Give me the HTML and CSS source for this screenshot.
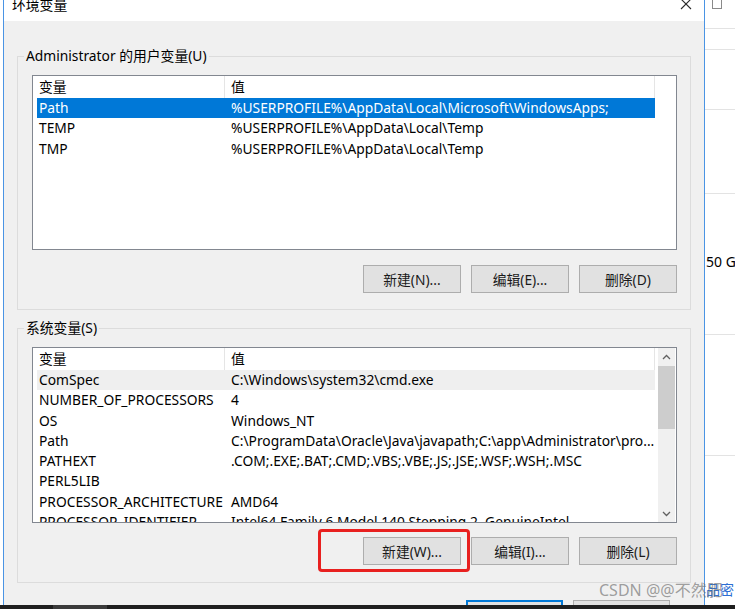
FILE: index.html
```html
<!DOCTYPE html>
<html lang="zh-CN">
<head>
    <meta charset="UTF-8">
    <title>环境变量</title>
    <link rel="stylesheet" href="styles.css">
</head>
<body>
<div class="screen">
    <div class="desk">
        <div class="bgLeft"></div>

        <!-- Fenêtre "环境变量" -->
        <div class="dialog">
            <div class="titleBar">
                <span class="title">环境变量</span>
                <svg class="closeIcon" width="12" height="12" viewBox="0 0 12 12"><path d="M1 1L11 11M11 1L1 11" stroke="#2b2b2b" stroke-width="1.1" fill="none"/></svg>
            </div>
            <div class="dialogBody">
                <fieldset class="group">
                    <legend>Administrator 的用户变量(U)</legend>
                    <div class="listView">
                        <div class="listMain">
                            <div class="listHeader"><span>变量</span><span>值</span></div>
                            <div class="row selected"><span>Path</span><span>%USERPROFILE%\AppData\Local\Microsoft\WindowsApps;</span></div>
                            <div class="row"><span>TEMP</span><span>%USERPROFILE%\AppData\Local\Temp</span></div>
                            <div class="row"><span>TMP</span><span>%USERPROFILE%\AppData\Local\Temp</span></div>
                        </div>
                    </div>
                    <div class="buttonRow">
                        <button class="btn">新建(N)...</button>
                        <button class="btn">编辑(E)...</button>
                        <button class="btn">删除(D)</button>
                    </div>
                </fieldset>

                <fieldset class="group system">
                    <legend>系统变量(S)</legend>
                    <div class="listView">
                        <div class="listMain">
                            <div class="listHeader"><span>变量</span><span>值</span></div>
                            <div class="row inactive"><span>ComSpec</span><span>C:\Windows\system32\cmd.exe</span></div>
                            <div class="row"><span>NUMBER_OF_PROCESSORS</span><span>4</span></div>
                            <div class="row"><span>OS</span><span>Windows_NT</span></div>
                            <div class="row"><span>Path</span><span>C:\ProgramData\Oracle\Java\javapath;C:\app\Administrator\pro...</span></div>
                            <div class="row"><span>PATHEXT</span><span>.COM;.EXE;.BAT;.CMD;.VBS;.VBE;.JS;.JSE;.WSF;.WSH;.MSC</span></div>
                            <div class="row"><span>PERL5LIB</span><span></span></div>
                            <div class="row"><span>PROCESSOR_ARCHITECTURE</span><span>AMD64</span></div>
                            <div class="row"><span>PROCESSOR_IDENTIFIER</span><span>Intel64 Family 6 Model 140 Stepping 2, GenuineIntel</span></div>
                        </div>
                        <div class="scrollBar">
                            <div class="scrollArrow"><svg width="9" height="6" viewBox="0 0 9 6"><path d="M1 5L4.5 1.5L8 5" stroke="#606060" stroke-width="1.3" fill="none"/></svg></div>
                            <div class="scrollThumb"></div>
                            <div class="scrollTrack"></div>
                            <div class="scrollArrow"><svg width="9" height="6" viewBox="0 0 9 6"><path d="M1 1L4.5 4.5L8 1" stroke="#606060" stroke-width="1.3" fill="none"/></svg></div>
                        </div>
                    </div>
                    <div class="buttonRow">
                        <button class="btn">新建(W)...</button>
                        <button class="btn">编辑(I)...</button>
                        <button class="btn">删除(L)</button>
                    </div>
                </fieldset>

                <div class="footerButtons">
                    <button class="btn primary">确定</button>
                    <button class="btn">取消</button>
                </div>
            </div>
        </div>

        <!-- Fenêtre en arrière-plan -->
        <div class="bgRight">
            <div class="bgRow" style="height:29px"><span class="winBox"></span></div>
            <div class="bgRow" style="height:21px"></div>
            <div class="bgRow" style="height:60px"></div>
            <div class="bgRow" style="height:84px"></div>
            <div class="bgRow" style="height:141px"><span class="bgText">50 GB</span></div>
            <div class="bgRow" style="height:121px"></div>
            <div class="bgRow last"><span class="bgLink">品密</span></div>
        </div>
    </div>
    <div class="taskbar"><span class="taskItem"></span></div>

    <div class="highlight"></div>
    <div class="watermark">CSDN @@不然肥</div>
</div>
</body>
</html>
```

FILE: styles.css
```css
* {
    box-sizing: border-box;
}
body {
    margin: 0;
    font-family: "Noto Sans", "Noto Sans CJK SC", sans-serif;
    font-size: 13.8px;
    color: #000;
    background: #fff;
}
.screen {
    position: relative;
    width: 735px;
    height: 609px;
    overflow: hidden;
}
.desk {
    display: flex;
    height: 605px;
    overflow: hidden;
}
.bgLeft {
    width: 3px;
    background: #fff;
}

/* Dialogue */
.dialog {
    width: 702px;
    display: flex;
    flex-direction: column;
    background: #f0f0f0;
    border-left: 1px solid #4a94e4;
    border-right: 1px solid #4a94e4;
}
.titleBar {
    height: 21px;
    flex: none;
    background: #fff;
    display: flex;
    justify-content: space-between;
    align-items: flex-start;
}
.title {
    margin: -5px 0 0 8px;
    line-height: 20px;
}
.closeIcon {
    margin: -2px 12px 0 0;
}
.dialogBody {
    flex: 1;
    padding: 0 13px;
}
.group {
    margin: 24px 0 0;
    padding: 0 13px 16px 14px;
    border: 1px solid #dcdcdc;
    min-width: 0;
}
.group.system {
    margin-top: 7px;
    padding-bottom: 17px;
}
.group legend {
    margin-left: -8px;
    padding: 0 2px;
    line-height: 22px;
}

/* Liste */
.listView {
    margin-top: 8px;
    height: 175px;
    display: flex;
    border: 1px solid #828790;
    background: #fff;
    overflow: hidden;
}
.group.system .listView {
    height: 176px;
}
.listMain {
    flex: 1;
    min-width: 0;
}
.listHeader {
    display: grid;
    grid-template-columns: 192px 430px;
    height: 22px;
}
.listHeader span {
    padding-left: 6px;
    line-height: 22px;
    border-right: 1px solid #e5e5e5;
}
.row {
    display: grid;
    grid-template-columns: 188px 430px;
    width: 618px;
    margin-left: 4px;
    height: 20.3px;
    line-height: 20.3px;
    white-space: nowrap;
}
.row span {
    overflow: hidden;
    text-overflow: ellipsis;
}
.row span:first-child {
    padding-left: 2px;
}
.row span + span {
    padding-left: 6px;
}
.row.selected {
    background: #0078d7;
    color: #fff;
}
.row.inactive {
    background: #efefef;
}

/* Barre de défilement */
.scrollBar {
    width: 17px;
    margin-right: 1px;
    display: flex;
    flex-direction: column;
    background: #f0f0f0;
}
.scrollArrow {
    height: 17px;
    display: flex;
    align-items: center;
    justify-content: center;
}
.scrollThumb {
    height: 63px;
    margin-top: 1px;
    background: #cdcdcd;
}
.scrollTrack {
    flex: 1;
}

/* Boutons */
.buttonRow {
    display: flex;
    justify-content: flex-end;
    gap: 10px;
    margin-top: 15px;
}
.group.system .buttonRow {
    margin-top: 14px;
}
.btn {
    width: 98px;
    height: 28px;
    padding: 0;
    border: 1px solid #adadad;
    background: #e1e1e1;
    font: inherit;
    color: #1a1a1a;
}
.footerButtons {
    display: flex;
    justify-content: flex-end;
    gap: 10px;
    margin-top: 17px;
    padding-right: 21px;
}
.footerButtons .btn {
    width: 97px;
}
.btn.primary {
    border: 2px solid #0078d7;
}

/* Arrière-plan à droite */
.bgRight {
    flex: 1;
    display: flex;
    flex-direction: column;
    background: #fff;
    overflow: hidden;
    white-space: nowrap;
}
.bgRow {
    flex: none;
    border-bottom: 1px solid #e3e3e3;
}
.bgRow.last {
    flex: 1;
    border-bottom: none;
}
.winBox {
    display: block;
    width: 10px;
    height: 10px;
    margin: -1px 0 0 7px;
    border: 1px solid #8a8a8a;
}
.bgText {
    display: block;
    padding: 58px 0 0 1px;
    line-height: 20px;
    font-size: 14px;
}
.bgLink {
    display: block;
    padding: 124px 0 0 1px;
    line-height: 20px;
    font-size: 14px;
    color: #2d6fd4;
}

.taskbar {
    height: 4px;
    padding-left: 53px;
    background: #1f1f1f;
}
.taskItem {
    display: block;
    width: 54px;
    height: 4px;
    background: #3b3b3b;
}

/* Annotation et filigrane */
.highlight {
    position: absolute;
    left: 318px;
    top: 529px;
    width: 152px;
    height: 43px;
    border: 3px solid #e8201f;
    border-radius: 4px;
}
.watermark {
    position: absolute;
    left: 599px;
    top: 580px;
    font-size: 16px;
    line-height: 20px;
    color: rgba(110, 110, 110, 0.65);
    white-space: nowrap;
}
```
